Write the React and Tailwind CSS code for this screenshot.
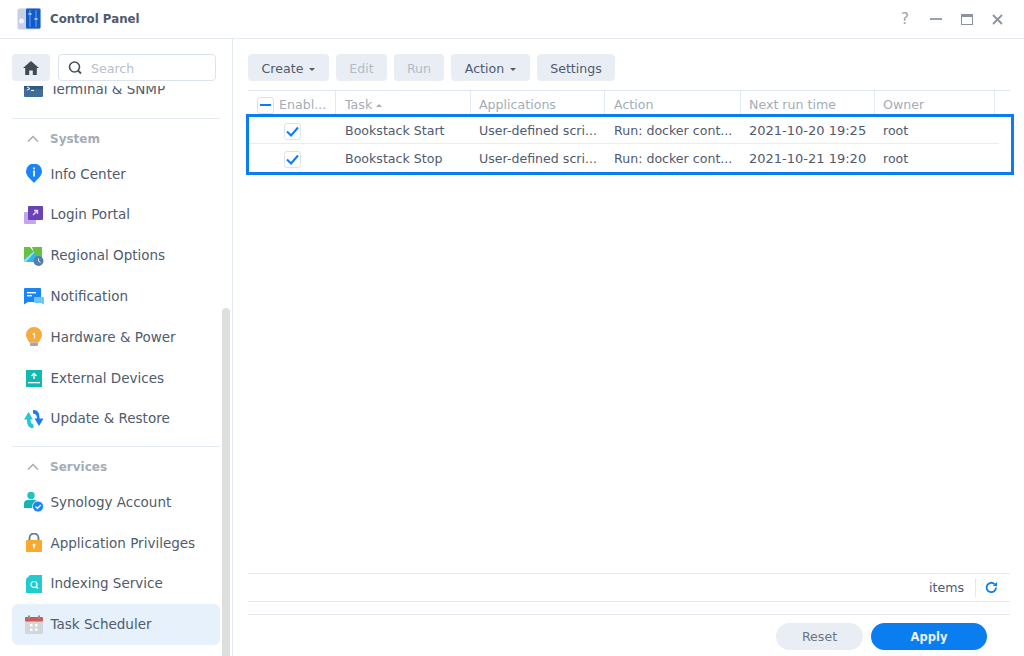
import React from "react";

function Icon({ name }) {
  switch (name) {
    case "terminal":
      return (
        <svg width="20" height="20" viewBox="0 0 20 20">
          <rect x="0" y="4" width="19" height="13" rx="1" fill="#3f6d99" />
          <rect x="0" y="4" width="19" height="5" fill="#2f5a85" />
          <path d="M3 7l3 1.500-3 1.500M7 10.500h3" stroke="#fff" strokeWidth="1" fill="none" />
        </svg>
      );
    case "info":
      return (
        <svg width="20" height="20" viewBox="0 0 20 20">
          <path d="M10 0a8 8 0 0 1 8 8c0 3.600-3.500 7-8 11.500C5.500 15 2 11.600 2 8a8 8 0 0 1 8-8z" fill="#1a85f5" transform="translate(0 -0.500)" />
          <rect x="9.200" y="6.500" width="1.700" height="6" fill="#fff" />
          <rect x="9.200" y="3.500" width="1.700" height="1.800" fill="#fff" />
        </svg>
      );
    case "login":
      return (
        <svg width="20" height="20" viewBox="0 0 20 20">
          <rect x="0" y="7" width="12" height="12" rx="1" fill="#c3a5ee" />
          <rect x="4" y="1" width="15" height="14" rx="1" fill="#6a42b8" />
          <path d="M9 10l4-4M10 5.500h3.500V9" stroke="#e8dcfa" strokeWidth="1.300" fill="none" />
        </svg>
      );
    case "regional":
      return (
        <svg width="20" height="20" viewBox="0 0 20 20">
          <rect x="0" y="1" width="18" height="15" fill="#2fb8ea" />
          <path d="M0 1h6l3.500 4.500L0 13z" fill="#66c23e" />
          <path d="M8 1h10v9.500l-3 .500L9 6z" fill="#66c23e" />
          <path d="M8 1l1.500 4.500L6 1z" fill="#fff" />
          <path d="M0 14l9.500-8.500 1 1L2 16H0z" fill="#fff" opacity="0.500" />
          <circle cx="14.500" cy="15" r="5" fill="#4f7fb0" />
          <path d="M14.500 12.500V15l2 1.500" stroke="#fff" strokeWidth="1" fill="none" />
        </svg>
      );
    case "notification":
      return (
        <svg width="20" height="20" viewBox="0 0 20 20">
          <path d="M1 1h15a1 1 0 0 1 1 1v12a1 1 0 0 1-1 1H4l-4 2.500V2a1 1 0 0 1 1-1z" fill="#1a85f5" />
          <rect x="3" y="5" width="9" height="1.400" fill="#fff" />
          <rect x="3" y="8" width="5" height="1.400" fill="#fff" />
          <path d="M11 10h8a1 1 0 0 1 1 1v6.500l-3-1.500h-6a1 1 0 0 1-1-1v-4a1 1 0 0 1 1-1z" fill="#6cc5f8" />
        </svg>
      );
    case "hardware":
      return (
        <svg width="20" height="20" viewBox="0 0 20 20">
          <path d="M10 0a8 8 0 0 1 8 8c0 3-2 4.500-3.200 7.500H5.200C4 12.500 2 11 2 8a8 8 0 0 1 8-8z" fill="#f6ab3a" />
          <rect x="6" y="15.500" width="8" height="3.500" rx="1" fill="#a0a7ad" />
          <path d="M8.800 7.500l1.700-1v5" stroke="#fff" strokeWidth="1.200" fill="none" />
        </svg>
      );
    case "external":
      return (
        <svg width="20" height="20" viewBox="0 0 20 20">
          <rect x="2" y="2" width="16" height="17" fill="#12b9b0" />
          <path d="M10 11V5.500M7.500 8L10 5.500 12.500 8" stroke="#fff" strokeWidth="1.300" fill="none" />
          <rect x="4" y="14" width="12" height="1.300" fill="#fff" />
        </svg>
      );
    case "update":
      return (
        <svg width="20" height="20" viewBox="0 0 20 20">
          <path d="M9.500 19C5 19.500 2.800 16 3 10.500H0L4.500 3 9 10.500H6.500c0 3 1 4.500 3 5z" fill="#24c6da" />
          <path d="M9 1c4.500-.500 6.700 3 6.500 8.500H19.500L15 17l-4.500-7.500H13c0-3-1-4.500-4-5z" fill="#1a7df0" />
        </svg>
      );
    case "account":
      return (
        <svg width="20" height="22" viewBox="0 0 20 22">
          <circle cx="7" cy="4.500" r="3.700" fill="#1ec3c3" />
          <path d="M0 17v-4a4 4 0 0 1 4-4h6a4 4 0 0 1 4 4v4z" fill="#14b5b5" />
          <circle cx="14" cy="15.500" r="5.500" fill="#1a85f5" stroke="#fff" strokeWidth="0.800" />
          <path d="M11.500 15.500l2 2 3.200-3.500" stroke="#fff" strokeWidth="1.300" fill="none" />
        </svg>
      );
    case "privileges":
      return (
        <svg width="20" height="20" viewBox="0 0 20 20">
          <path d="M5.500 8V5a4.500 4.500 0 0 1 9 0v3" stroke="#5f7c96" strokeWidth="1.800" fill="none" />
          <rect x="2" y="7" width="16" height="12" rx="1" fill="#f8a92e" />
          <circle cx="10" cy="12" r="1.500" fill="#fff" />
          <rect x="9.300" y="12" width="1.400" height="3.500" fill="#fff" />
        </svg>
      );
    case "indexing":
      return (
        <svg width="20" height="20" viewBox="0 0 20 20">
          <path d="M6 1h12v18H2V5z" fill="#20ccd0" />
          <circle cx="10" cy="10.500" r="3" fill="none" stroke="#fff" strokeWidth="1.200" />
          <path d="M12 12.500l2 2" stroke="#fff" strokeWidth="1.200" />
        </svg>
      );
    case "scheduler":
      return (
        <svg width="20" height="20" viewBox="0 0 20 20">
          <rect x="1" y="2" width="18" height="17" rx="1" fill="#d3d7da" />
          <rect x="1" y="2" width="18" height="4.500" rx="1" fill="#d15a57" />
          <rect x="4" y="0.500" width="2" height="3.500" fill="#8b8f94" />
          <rect x="14" y="0.500" width="2" height="3.500" fill="#8b8f94" />
          <g fill="#fff">
            <rect x="6" y="9" width="2.500" height="2.500" />
            <rect x="11" y="9" width="2.500" height="2.500" />
            <rect x="6" y="13.500" width="2.500" height="2.500" />
            <rect x="11" y="13.500" width="2.500" height="2.500" />
          </g>
        </svg>
      );
    default:
      return null;
  }
}

function Item({ icon, label, active }) {
  return (
    <div className={`flex h-[40.8px] items-center rounded-md pl-3 ${active ? "bg-[#e6f1fc]" : ""}`}>
      <span className="flex h-5 w-5 shrink-0 items-center justify-center">
        <Icon name={icon} />
      </span>
      <span className="ml-[6.500px] whitespace-nowrap pb-px text-[13.5px] text-[#4f5b6e]">{label}</span>
    </div>
  );
}

function Section({ label }) {
  return (
    <div className="flex h-[34.6px] items-center pl-[15px] pt-[5px]">
      <svg width="12" height="8" viewBox="0 0 12 8">
        <path d="M1 6.500L6 1.500l5 5" stroke="#a3adb8" strokeWidth="1.500" fill="none" />
      </svg>
      <span className="ml-[11px] text-[12px] font-bold text-[#a3adb8]">{label}</span>
    </div>
  );
}

function ToolButton({ children, w, disabled, caret }) {
  return (
    <div className={`flex h-[27px] items-center justify-center rounded-[4px] bg-[#e9eef5] pt-[3px] text-[12.6px] ${w} ${disabled ? "text-[#b2bcc8]" : "text-[#4f5b6e]"}`}>
      {children}
      {caret && <span className="ml-[6px] h-0 w-0 border-x-[3.5px] border-t-[3.5px] border-x-transparent border-t-[#4f5b6e]" />}
    </div>
  );
}

function Check({ minus }) {
  return (
    <div className="flex h-[17px] w-[17px] items-center justify-center rounded-[3px] border border-[#dbe3ec] bg-white">
      {minus ? (
        <span className="h-[2px] w-[11px] bg-[#0a7df0]" />
      ) : (
        <svg width="13" height="11" viewBox="0 0 13 11">
          <path d="M1 5.500l4 4 7-8" stroke="#0a7df0" strokeWidth="2" fill="none" />
        </svg>
      )}
    </div>
  );
}

const cols = ["w-[88px]", "w-[135px]", "w-[134px]", "w-[136px]", "w-[134px]", "w-[120px]"];

function Cell({ className, children }) {
  return <div className={`flex h-full shrink-0 items-center pl-2 whitespace-nowrap ${className}`}>{children}</div>;
}

function Row({ name, next, border }) {
  return (
    <div className={`flex h-[28px] w-[751px] items-center text-[12.6px] text-[#4f5b6e] ${border ? "border-b border-[#e8edf3] pt-[3px]" : "pt-[2px]"}`}>
      <Cell className={`${cols[0]} justify-center !pl-0`}><Check /></Cell>
      <Cell className={`${cols[1]} !pl-[9px]`}>{name}</Cell>
      <Cell className={cols[2]}>User-defined scri...</Cell>
      <Cell className={`${cols[3]} !pl-[9px]`}>Run: docker cont...</Cell>
      <Cell className={`${cols[4]} text-[13px]`}>{next}</Cell>
      <Cell className="w-[112px]">root</Cell>
    </div>
  );
}

function Head({ className, children }) {
  return <div className={`flex h-full shrink-0 items-center whitespace-nowrap border-r border-[#e4eaf1] pl-2 pt-[3px] text-[12.6px] text-[#a3adb8] ${className}`}>{children}</div>;
}

export default function App() {
  return (
    <div className="flex h-[656px] w-[1024px] flex-col overflow-hidden bg-white font-['DejaVu_Sans',sans-serif]">
      <header className="flex h-[39px] shrink-0 items-center border-b border-[#e6ebf2] pl-[17px] pr-[21px]">
        <svg width="24" height="24" viewBox="0 0 24 24">
          <rect x="0.500" y="1.500" width="23" height="21" rx="2" fill="#c9d0e2" />
          <rect x="9" y="1.500" width="14.500" height="20" rx="1" fill="#1259c9" />
          <path d="M13 3v17M19 3v17" stroke="#6da5ec" strokeWidth="1" />
          <rect x="11.500" y="6" width="3" height="2" fill="#9cc4f5" />
          <rect x="17.500" y="11" width="3" height="2" fill="#9cc4f5" />
          <circle cx="4.500" cy="14" r="2.500" fill="#f2f4f9" />
        </svg>
        <span className="ml-[9px] pt-[2px] text-[11.8px] font-bold text-[#4f5b6e]">Control Panel</span>
        <div className="ml-auto flex items-center">
          <span className="mr-[2px] text-[15px] leading-none text-[#9aa3ad]">?</span>
          <span className="ml-[19px] h-[2px] w-[12px] bg-[#98a0a9]" />
          <span className="ml-[19px] h-[11px] w-[12px] border border-t-[3px] border-[#8b949e]" />
          <svg className="ml-[19px]" width="11" height="11" viewBox="0 0 11 11">
            <path d="M1 1l9 9M10 1l-9 9" stroke="#8b949e" strokeWidth="1.800" />
          </svg>
        </div>
      </header>

      <div className="relative flex min-h-0 flex-1">
        <aside className="relative flex w-[233px] shrink-0 flex-col border-r border-[#e4eaf1]">
          <div className="flex h-[47px] shrink-0 items-start px-3 pr-4 pt-[15px]">
            <div className="flex h-[27px] w-[38px] items-center justify-center rounded-[4px] bg-[#e9eef5]">
              <svg width="16" height="14" viewBox="0 0 16 14">
                <path d="M8 0L0 7h2.200v7h4V9.500h3.600V14h4V7H16z" fill="#3f4a55" />
              </svg>
            </div>
            <div className="ml-2 flex h-[27px] w-[158px] items-center rounded-[4px] border border-[#dbe3ec] pl-2">
              <svg width="16" height="16" viewBox="0 0 16 16">
                <circle cx="7.500" cy="7" r="5" fill="none" stroke="#47525d" strokeWidth="1.600" />
                <path d="M11 10.500l3 3" stroke="#47525d" strokeWidth="1.800" />
              </svg>
              <span className="ml-[8px] pt-[3px] text-[12.6px] text-[#b8c0c9]">Search</span>
            </div>
          </div>
          <div className="min-h-0 flex-1 overflow-hidden px-3">
            <div className="-mt-[16.5px]">
              <Item icon="terminal" label="Terminal & SNMP" />
              <div className="mt-2 border-t border-[#e4eaf1]" />
              <Section label="System" />
              <Item icon="info" label="Info Center" />
              <Item icon="login" label="Login Portal" />
              <Item icon="regional" label="Regional Options" />
              <Item icon="notification" label="Notification" />
              <Item icon="hardware" label="Hardware & Power" />
              <Item icon="external" label="External Devices" />
              <Item icon="update" label="Update & Restore" />
              <div className="mt-[7px] border-t border-[#e4eaf1]" />
              <Section label="Services" />
              <Item icon="account" label="Synology Account" />
              <Item icon="privileges" label="Application Privileges" />
              <Item icon="indexing" label="Indexing Service" />
              <Item icon="scheduler" label="Task Scheduler" active />
            </div>
          </div>
          <div className="absolute bottom-0 left-[222px] h-[348px] w-2 rounded-t-full bg-[#dedede]" />
        </aside>

        <main className="flex min-w-0 flex-1 flex-col pl-[15px] pr-[14px]">
          <div className="flex h-[42px] shrink-0 items-end gap-[7px]">
            <ToolButton w="w-[81px]" caret>Create</ToolButton>
            <ToolButton w="w-[51px]" disabled>Edit</ToolButton>
            <ToolButton w="w-[50px]" disabled>Run</ToolButton>
            <ToolButton w="w-[79px]" caret>Action</ToolButton>
            <ToolButton w="w-[78px]">Settings</ToolButton>
          </div>
          <div className="mt-[9px] flex h-[26px] shrink-0 items-center border-t border-[#dfe6ee]">
            <Head className={`${cols[0]} !pl-[9px]`}>
              <Check minus />
              <span className="ml-[5px]">Enabl...</span>
            </Head>
            <Head className={`${cols[1]} !pl-[9px]`}>
              Task
              <span className="ml-[4px] h-0 w-0 border-x-[3.5px] border-b-[3.5px] border-x-transparent border-b-[#a3adb8]" />
            </Head>
            <Head className={cols[2]}>Applications</Head>
            <Head className={`${cols[3]} !pl-[9px]`}>Action</Head>
            <Head className={cols[4]}>Next run time</Head>
            <Head className="w-[120px]">Owner</Head>
          </div>
          <Row name="Bookstack Start" next="2021-10-20 19:25" border />
          <Row name="Bookstack Stop" next="2021-10-21 19:20" />
          <div className="flex-1" />
          <div className="flex h-[29px] shrink-0 items-center justify-end border-y border-[#e6ebf2] pr-[12px]">
            <span className="pt-[2px] text-[12.6px] text-[#4f5b6e]">items</span>
            <span className="ml-[11px] h-[19px] w-px bg-[#e4eaf1]" />
            <svg className="ml-[9px]" width="13" height="13" viewBox="0 0 13 13">
              <path d="M11 6.500A4.700 4.700 0 1 1 9.500 3" stroke="#0a7df0" strokeWidth="1.800" fill="none" />
              <path d="M7.800 4.800L12 5.200V1z" fill="#0a7df0" />
            </svg>
          </div>
          <div className="mt-[12px] flex h-[42px] shrink-0 items-start justify-end gap-2 border-t border-[#e6ebf2] pt-[8px] pr-[23px]">
            <div className="flex h-[27px] w-[87px] items-center justify-center rounded-full bg-[#e9eef5] pt-[2px] text-[12.6px] text-[#6b7580]">Reset</div>
            <div className="flex h-[27px] w-[116px] items-center justify-center rounded-full bg-[#0a7df0] pt-[2px] text-[11.5px] font-bold text-[#e8f3ff]">Apply</div>
          </div>
        </main>

        <div className="pointer-events-none absolute left-[246px] top-[75px] h-[61px] w-[768px] border-[3px] border-[#0a7df0]" />
      </div>
    </div>
  );
}
